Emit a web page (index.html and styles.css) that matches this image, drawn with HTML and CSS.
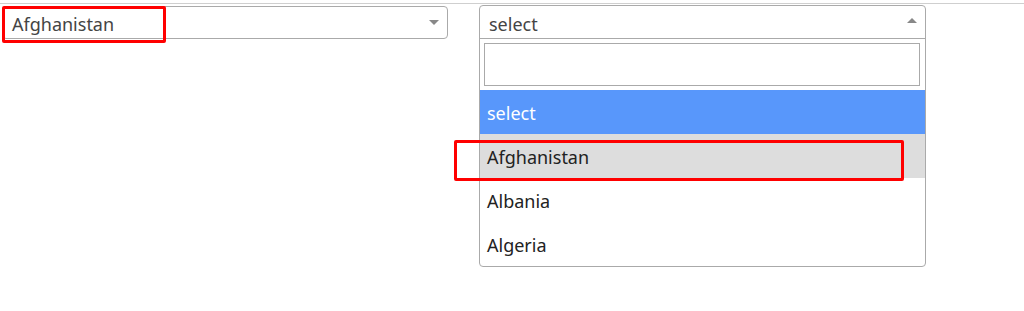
FILE: index.html
```html
<!DOCTYPE html>
<html>
<head>
<meta charset="utf-8">
<link rel="stylesheet" href="styles.css">
</head>
<body>
<div class="topline"></div>
<div class="row">
  <div class="select closed">
    <span class="sel-text">Afghanistan</span>
    <span class="arrow down"></span>
  </div>
  <div class="select open">
    <div class="head">
      <span class="sel-text">select</span>
      <span class="arrow up"></span>
    </div>
    <div class="search"><div class="search-input"></div></div>
    <ul class="options">
      <li class="opt highlighted">select</li>
      <li class="opt selected">Afghanistan</li>
      <li class="opt">Albania</li>
      <li class="opt">Algeria</li>
    </ul>
  </div>
</div>
<div class="mark mark-left"></div>
<div class="mark mark-right"></div>
</body>
</html>
```
FILE: styles.css
```css
html, body {
  margin: 0;
  padding: 0;
  background: #fff;
  font-family: "Noto Sans", "Open Sans", sans-serif;
}
.topline {
  height: 3px;
  border-bottom: 1px solid #cfcfcf;
}
.row {
  display: flex;
  align-items: flex-start;
  padding-left: 2px;
  gap: 31px;
  margin-top: 1px;
}
.select {
  box-sizing: border-box;
  border: 1px solid #aaa;
  border-radius: 4px;
  background: #fff;
  position: relative;
}
.closed {
  width: 446px;
  height: 33px;
  margin-top: 1px;
  display: flex;
  align-items: center;
  padding-left: 9px;
  padding-top: 3px;
}
.sel-text {
  font-size: 18px;
  color: #444;
  line-height: 1;
}
.arrow {
  position: absolute;
  width: 0;
  height: 0;
  border-left: 5px solid transparent;
  border-right: 5px solid transparent;
}
.arrow.down {
  right: 8px;
  top: 13px;
  border-top: 5px solid #888;
}
.open {
  width: 447px;
}
.head {
  height: 33px;
  box-sizing: border-box;
  border-bottom: 1px solid #aaa;
  display: flex;
  align-items: center;
  padding-left: 9px;
  padding-top: 3px;
  position: relative;
}
.arrow.up {
  right: 8px;
  top: 12px;
  border-bottom: 5px solid #888;
}
.search {
  padding: 4px 5px 4px 4px;
}
.search-input {
  height: 41px;
  border: 1px solid #aaa;
}
.options {
  list-style: none;
  margin: 0;
  padding: 0;
}
.opt {
  height: 44px;
  box-sizing: border-box;
  padding-left: 7px;
  padding-top: 2px;
  display: flex;
  align-items: center;
  font-size: 18px;
  color: #222;
}
.opt.highlighted {
  background: #5897fb;
  color: #fff;
}
.opt.selected {
  background: #ddd;
}
.mark {
  position: absolute;
  box-sizing: border-box;
  border: 3px solid #f00;
  border-radius: 2px;
}
.mark-left {
  left: 2px;
  top: 6px;
  width: 164px;
  height: 37px;
}
.mark-right {
  left: 454px;
  top: 140px;
  width: 450px;
  height: 41px;
}
```
